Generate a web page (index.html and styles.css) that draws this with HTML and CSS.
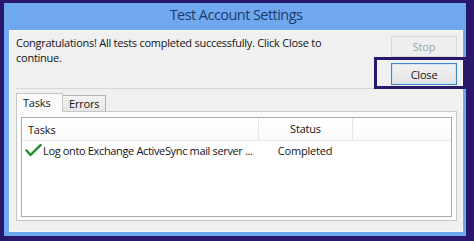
FILE: index.html
```html
<!DOCTYPE html>
<html lang="en">
<head>
  <meta charset="UTF-8" />
  <title>Test Account Settings</title>
  <link rel="stylesheet" href="styles.css">
</head>
<body>

  <div class="window">
    <div class="titlebar">Test Account Settings</div>

    <div class="client">
      <!-- message and buttons -->
      <div class="top">
        <p class="message">Congratulations! All tests completed successfully. Click Close to continue.</p>
        <div class="buttons">
          <button class="btn" disabled>Stop</button>
          <button class="btn btn-default">Close</button>
        </div>
      </div>

      <div class="separator"></div>

      <!-- tabs -->
      <div class="tabs">
        <div class="tab active">Tasks</div>
        <div class="tab">Errors</div>
      </div>

      <div class="pane">
        <div class="listview">
          <div class="lv-row lv-header">
            <div class="col col-task">Tasks</div>
            <div class="col col-status">Status</div>
            <div class="col col-rest"></div>
          </div>
          <div class="lv-row">
            <div class="col col-task">
              <svg class="check" width="17" height="13" viewBox="0 0 17 13">
                <path d="M1.5 6.5 L5.5 11 L15.5 1.2" fill="none" stroke="#1f8a2a" stroke-width="2.4" stroke-linecap="round" stroke-linejoin="round"/>
              </svg>
              <span class="task-name">Log onto Exchange ActiveSync mail server ...</span>
            </div>
            <div class="col col-status">Completed</div>
            <div class="col col-rest"></div>
          </div>
        </div>
      </div>
    </div>
  </div>

  <!-- annotation box drawn over the Close button -->
  <div class="highlight"></div>

</body>
</html>
```

FILE: styles.css
```css
* { box-sizing: border-box; margin: 0; padding: 0; }
body {
  width: 474px; height: 241px; overflow: hidden;
  background: #29176c;
  padding: 3px 8px 5px 4px;
  position: relative;
  font-family: "Open Sans", "Noto Sans", sans-serif;
  font-size: 11px;
  letter-spacing: -0.2px;
  color: #141414;
}

.window {
  height: 233px;
  background: #70a8ef;
  display: flex; flex-direction: column;
  padding: 0 3px 4px 5px;
}
.titlebar {
  height: 27px; line-height: 24px;
  text-align: center;
  font-size: 14.5px;
  letter-spacing: -0.55px;
  color: #1d3b6a;
}
.client {
  flex: 1;
  background: #f0f0f0;
  border: 1px solid #f7f8fa;
}

/* message + buttons */
.top { display: flex; justify-content: space-between; padding: 5px 5px 0 6px; }
.message { width: 312px; line-height: 15px; margin-top: -1px; letter-spacing: -0.25px; }
.buttons { display: flex; flex-direction: column; gap: 6px; }
.btn {
  width: 66px; height: 21px;
  font: inherit; letter-spacing: inherit;
  background: #efefef;
  border: 1px solid #d9d9d9;
  color: #a3a3a3;
}
.btn-default {
  height: 22px;
  background: linear-gradient(#f2f2f2, #e3e3e3);
  border: 1px solid #3d86c6;
  box-shadow: inset 0 0 0 1px #cfe3f5;
  color: #141414;
}

.separator { height: 1px; background: #d6d6d6; margin: 3px 5px 0 6px; }

/* tabs */
.tabs { display: flex; align-items: flex-end; height: 18px; margin: 4px 0 0 6px; }
.tab {
  height: 16px; line-height: 15px;
  padding: 0 6px;
  border: 1px solid #b3b3b3; border-bottom: none; border-left: none;
  background: linear-gradient(#f3f3f3, #e6e6e6);
}
.tab.active {
  height: 19px; line-height: 18px; width: 47px;
  border-left: 1px solid #c6c6c6; border-color: #c6c6c6;
  background: #fbfbfb;
  margin-bottom: -1px;
  position: relative;
}
.pane {
  height: 110px; margin: 0 5px 0 6px;
  border: 1px solid #c6c6c6;
  background: #fbfbfb;
  padding: 5px 4px 3px 4px;
}

/* list view */
.listview { height: 100px; border: 1px solid #a9a9a9; background: #fff; }
.lv-row { display: flex; height: 19px; line-height: 19px; }
.lv-header { height: 23px; line-height: 21px; border-bottom: 1px solid #ececec; background: linear-gradient(#fff, #fafafa); }
.col { white-space: nowrap; }
.col-task { width: 236px; padding-left: 6px; display: flex; align-items: center; }
.col-status { width: 94px; text-align: center; }
.col-rest { flex: 1; }
.lv-header .col-status, .lv-header .col-rest { border-left: 1px solid #e6e6e6; }
.check { flex-shrink: 0; margin: 0 1px 0 -3px; }
.task-name { letter-spacing: -0.35px; }

.highlight {
  position: absolute; left: 374px; top: 57px;
  width: 92px; height: 32px;
  border: 3px solid #29176c;
}
```
